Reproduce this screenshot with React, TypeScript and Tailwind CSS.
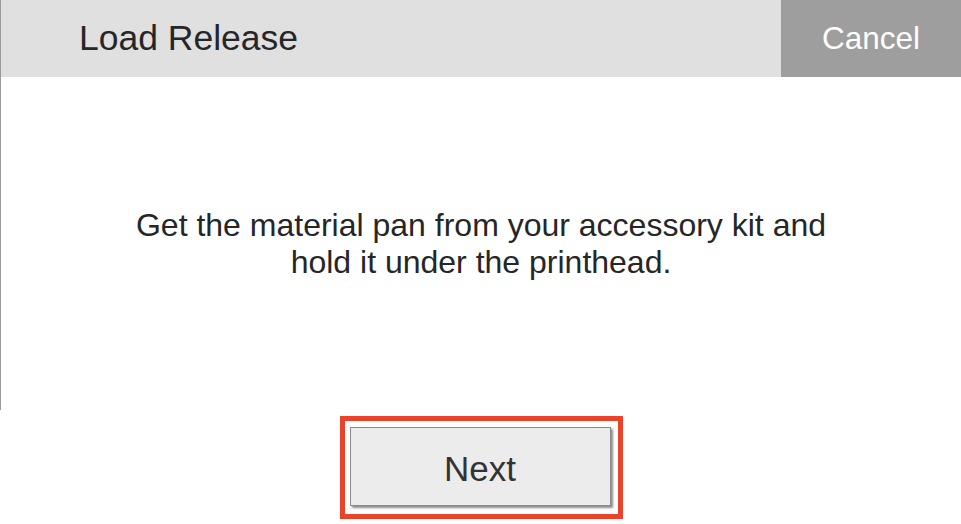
export default function App() {
  return (
    <div className="w-[961px] h-[524px] bg-white flex flex-col overflow-hidden" style={{ fontFamily: '"Liberation Sans", Arial, sans-serif' }}>
      <div className="h-[410px] border-l border-[#9a9a9a] flex flex-col">
        <div className="h-[77px] bg-[#e0e0e0] flex items-stretch">
          <div className="flex-1 flex items-center pl-[78px] text-[35.5px] text-[#262626]">Load Release</div>
          <div className="w-[180px] bg-[#9e9e9e] flex items-center justify-center text-[31.5px] text-white">Cancel</div>
        </div>
        <div className="flex-1 flex items-center justify-center">
          <p className="text-center text-[32px] leading-[37px] text-[#262626]">
            Get the material pan from your accessory kit and
            <br />
            hold it under the printhead.
          </p>
        </div>
      </div>
      <div className="flex justify-center pt-[6px]">
        <div className="border-[5px] border-[#eb4329] pl-[5px] pt-[6px] pr-[7px] pb-[8px] ml-[1px]">
          <button className="w-[261px] h-[79px] bg-[#ececec] border border-[#8a8a8a] shadow-[2px_2px_2px_rgba(0,0,0,0.45)] flex items-center justify-center pt-[5px] text-[35px] text-[#333333]">
            Next
          </button>
        </div>
      </div>
    </div>
  );
}
